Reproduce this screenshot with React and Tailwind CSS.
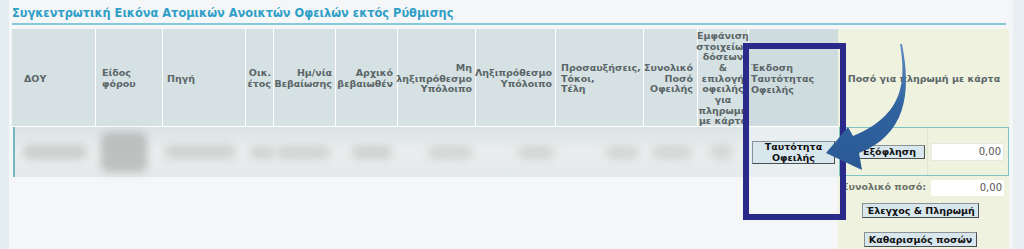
import React from 'react'

const cols = [
  { w: 'w-[84px]', lines: ['ΔΟΥ'], cls: 'justify-start text-left pl-[12px]', blob: 'w-[64px] h-[14px] bg-[#c2c2c2]', bj: 'justify-start pl-[8px]' },
  { w: 'w-[67px]', lines: ['Είδος', 'φόρου'], cls: 'justify-start text-left pl-[6px]', blob: 'w-[46px] h-[40px] bg-[#b0b0b0]', bj: 'justify-start pl-[5px]' },
  { w: 'w-[83px]', lines: ['Πηγή'], cls: 'justify-start text-left pl-[4px]', blob: 'w-[70px] h-[14px] bg-[#c8c8c8]', bj: 'justify-start pl-[2px]' },
  { w: 'w-[28px]', lines: ['Οικ.', 'έτος'], cls: 'justify-end text-right pr-[2px]', blob: 'w-[24px] h-[13px] bg-[#cacaca]', bj: 'justify-end' },
  { w: 'w-[62px]', lines: ['Ημ/νία', 'Βεβαίωσης'], cls: 'justify-end text-right pr-[3px]', blob: 'w-[54px] h-[13px] bg-[#cacaca]', bj: 'justify-end pr-[6px]' },
  { w: 'w-[62px]', lines: ['Αρχικό', 'βεβαιωθέν'], cls: 'justify-end text-right pr-[4px]', blob: 'w-[40px] h-[13px] bg-[#c6c6c6]', bj: 'justify-end pr-[6px]' },
  { w: 'w-[78px]', lines: ['Μη', 'ληξιπρόθεσμο', 'Υπόλοιπο'], cls: 'justify-end text-right pr-[3px]', blob: 'w-[44px] h-[13px] bg-[#cccccc]', bj: 'justify-end pr-[4px]' },
  { w: 'w-[80px]', lines: ['Ληξιπρόθεσμο', 'Υπόλοιπο'], cls: 'justify-end text-right pr-[3px]', blob: 'w-[36px] h-[13px] bg-[#cccccc]', bj: 'justify-end pr-[2px]' },
  { w: 'w-[88px]', lines: ['Προσαυξήσεις,', 'Τόκοι,', 'Τέλη'], cls: 'justify-start text-left pl-[5px]', blob: 'w-[32px] h-[13px] bg-[#cccccc]', bj: 'justify-end pr-[6px]' },
  { w: 'w-[54px]', lines: ['Συνολικό', 'Ποσό', 'Οφειλής'], cls: 'justify-end text-right pr-[4px]', blob: 'w-[38px] h-[13px] bg-[#cccccc]', bj: 'justify-end pr-[7px]' },
  { w: 'w-[51px]', lines: ['Εμφάνιση', 'στοιχείων', 'δόσεων', '&', 'επιλογή', 'οφειλής', 'για', 'πληρωμή', 'με κάρτα'], cls: 'justify-center text-center', blob: 'w-[22px] h-[16px] bg-[#d0d0d0]', bj: 'justify-start pl-[12px]' },
]

function Btn({ children, className }) {
  return (
    <div className={`flex items-center justify-center text-center bg-[#d8e7ee] border border-[#8a9296] border-r-[#4a4f52] border-b-[#4a4f52] text-[9.5px] leading-[11px] font-bold text-[#111] ${className}`}>
      {children}
    </div>
  )
}

export default function App() {
  return (
    <div className="relative w-[1024px] h-[249px] overflow-hidden flex bg-[#f4f6f7] font-['DejaVu_Sans',sans-serif]">
      <div className="w-[9px] shrink-0 bg-[#e5eef1]" />
      <div className="w-[1000px] shrink-0 pl-[3px] flex flex-col">
        <div className="h-[25px] mr-[3px] flex items-end pb-[3px] border-b-2 border-[#86c9dd]">
          <h1 className="text-[11.4px] leading-[13px] font-bold text-[#2f9fc7]">
            Συγκεντρωτική Εικόνα Ατομικών Ανοικτών Οφειλών εκτός Ρύθμισης
          </h1>
        </div>
        <div className="mt-[4px] flex flex-1">
          <div className="w-[826px] flex flex-col">
            <div className="h-[98px] flex border-b border-white">
              {cols.map((c, i) => (
                <div key={i} className={`${c.w} shrink-0 h-full flex items-center bg-[#d5e1e3] border-r border-white text-[9.5px] leading-[10.7px] font-bold text-[#5b6668] whitespace-nowrap ${c.cls}`}>
                  <div className="pt-[3px]">
                    {c.lines.map((l, j) => (
                      <div key={j}>{l}</div>
                    ))}
                  </div>
                </div>
              ))}
              <div className="w-[89px] shrink-0 h-full flex items-center bg-[#cfdcdf] pl-[2px] text-[9.5px] leading-[11px] font-bold text-[#5b6668]">
                <div className="pt-[2px]">
                  <div>Έκδοση</div>
                  <div>Ταυτότητας</div>
                  <div>Οφειλής</div>
                </div>
              </div>
            </div>
            <div className="h-[50px] flex">
              <div className="w-[737px] flex border-l-2 border-[#76b7c0] ml-[1px] bg-linear-to-b from-[#dbe4e4] via-[#eaeded] to-[#e4e9e9]">
                {cols.map((c, i) => (
                  <div key={i} className={`${i === 0 ? 'w-[81px]' : c.w} shrink-0 h-full flex items-center ${c.bj}`}>
                    <div className={`${c.blob} rounded-md blur-[4px] opacity-75`} />
                  </div>
                ))}
              </div>
              <div className="w-[89px] shrink-0 flex items-center bg-[#e9eff0] pl-[3px]">
                <Btn className="w-[83px] h-[23px]">
                  <div>
                    <div>Ταυτότητα</div>
                    <div>Οφειλής</div>
                  </div>
                </Btn>
              </div>
            </div>
          </div>
          <div className="w-[171px] flex flex-col bg-[#eef2df] pl-[1px]">
            <div className="h-[98px] flex items-center justify-center pt-[3px] text-[9.5px] font-bold text-[#5b6668] whitespace-nowrap">
              Ποσό για πληρωμή με κάρτα
            </div>
            <div className="h-[49px] flex border border-[#7dc4c7]">
              <div className="w-[88px] flex items-center justify-end pr-[2px] border-r border-[#dfe6d8]">
                <Btn className="w-[71px] h-[14px]">Εξόφληση</Btn>
              </div>
              <div className="flex-1 flex items-center pl-[3px]">
                <div className="w-[73px] h-[18px] bg-white border border-[#e4e8e0] flex items-center justify-end pr-[2px] text-[10px] text-[#555]">0,00</div>
              </div>
            </div>
            <div className="mt-[3px] h-[17px] flex items-center">
              <div className="w-[87px] text-right text-[9.5px] font-bold text-[#6b726a] whitespace-nowrap">Συνολικό ποσό:</div>
              <div className="ml-[5px] w-[73px] h-[16px] bg-white flex items-center justify-end pr-[2px] text-[10px] text-[#555]">0,00</div>
            </div>
            <div className="mt-[7px] pl-[23px]">
              <Btn className="w-[117px] h-[15px]">Έλεγχος &amp; Πληρωμή</Btn>
            </div>
            <div className="mt-[14px] pl-[25px]">
              <Btn className="w-[113px] h-[15px]">Καθαρισμός ποσών</Btn>
            </div>
          </div>
        </div>
      </div>
      <div className="flex-1 bg-[#e8eef1] border-l-4 border-[#f3f5f6]" />

      <div className="absolute left-[743px] top-[43px] w-[103px] h-[177px] border-[6px] border-[#2a2a8a] pointer-events-none" />
      <svg className="absolute left-0 top-0 pointer-events-none" width="1024" height="249" viewBox="0 0 1024 249">
        <defs>
          <linearGradient id="ar" x1="0" y1="0" x2="0" y2="1">
            <stop offset="0" stopColor="#5d8cc2" />
            <stop offset="0.5" stopColor="#2f629f" />
            <stop offset="1" stopColor="#2b5a95" />
          </linearGradient>
        </defs>
        <path d="M 900 44 C 906 80 905 115 853 136 L 848 127 L 826 153 L 862 170 L 859 153 C 905 135 912 95 902 44 Z" fill="url(#ar)" />
      </svg>
    </div>
  )
}
